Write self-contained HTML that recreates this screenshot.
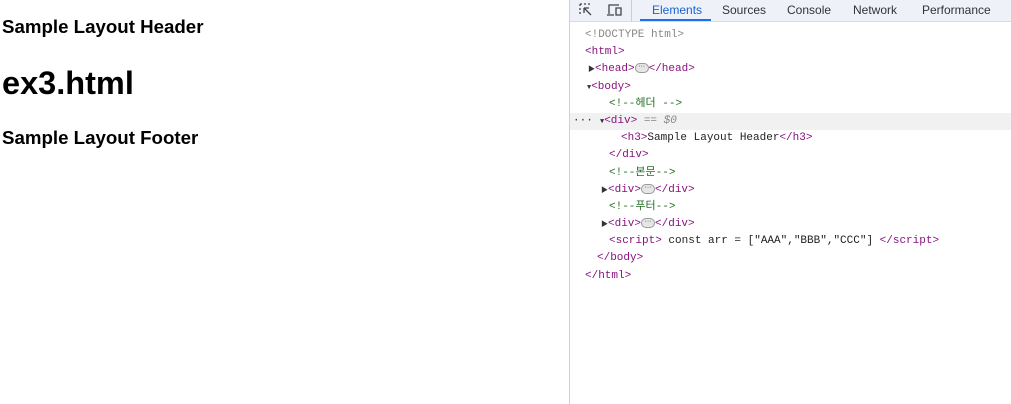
<!DOCTYPE html>
<html><head><style>
body{margin:0;width:1011px;height:404px;overflow:hidden;background:#fff;font-family:"Liberation Sans",sans-serif;position:relative}
.l{position:absolute;left:2px;font-weight:bold;margin:0;white-space:nowrap}
.dt{position:absolute;left:569px;top:0;width:442px;height:404px;border-left:1px solid #d0d0d0;box-sizing:border-box}
.tb{height:21px;background:#eef1f8;border-bottom:1px solid #d6dae2;position:relative;font-size:12px;color:#333}
.tab{position:absolute;top:3px}
.code{position:absolute;left:0;top:27px;width:100%;font-family:"Liberation Mono","Noto Sans CJK KR",monospace;font-size:11px}
.ln{height:17.2px;line-height:17.2px;white-space:pre;position:relative}
.t{color:#881280}.g{color:#236e25}.gr{color:#888}.k{color:#222}
.tri{font-size:7px;color:#333}
.ell{display:inline-block;width:12px;height:8px;border:1px solid #999;border-radius:5px;background:#e6e6e6;font-size:7px;line-height:5px;text-align:center;vertical-align:middle;color:#333;font-family:"Liberation Sans",sans-serif}
</style></head><body>
<div class="l" style="top:16px;font-size:18.7px">Sample Layout Header</div>
<div class="l" style="top:65px;font-size:32.5px">ex3.html</div>
<div class="l" style="top:127px;font-size:18.7px">Sample Layout Footer</div>
<div class="dt">
<div class="tb">
<svg style="position:absolute;left:9px;top:3px" width="14" height="14" viewBox="0 0 14 14" fill="none" stroke="#444" stroke-width="1.3"><path d="M1 1h2M5 1h2M9 1h2M1 1v2M1 5v2M1 9v2M5 5l7 7M5 5h5M5 5v5" /></svg>
<svg style="position:absolute;left:36px;top:3px" width="17" height="14" viewBox="0 0 17 14" fill="none" stroke="#444" stroke-width="1.3"><path d="M3 11V2h10M1 12h7M10 5h5v7h-5z"/></svg>
<div style="position:absolute;left:61px;top:0;width:1px;height:21px;background:#ccc"></div>
<span class="tab" style="left:82px;color:#1a62d6">Elements</span>
<div style="position:absolute;left:70px;top:19px;width:71px;height:2px;background:#1a73e8"></div>
<span class="tab" style="left:152px">Sources</span>
<span class="tab" style="left:217px">Console</span>
<span class="tab" style="left:283px">Network</span>
<span class="tab" style="left:352px">Performance</span>
</div>
<div class="code">
<div class="ln" style="padding-left:15px"><span class="gr">&lt;!DOCTYPE html&gt;</span></div>
<div class="ln" style="padding-left:15px"><span class="t">&lt;html&gt;</span></div>
<div class="ln" style="padding-left:18px"><span class="tri">▶</span><span class="t">&lt;head&gt;</span><span class="ell">···</span><span class="t">&lt;/head&gt;</span></div>
<div class="ln" style="padding-left:17px"><span class="tri">▼</span><span class="t">&lt;body&gt;</span></div>
<div class="ln" style="padding-left:39px"><span class="g">&lt;!--헤더 --&gt;</span></div>
<div class="ln" style="padding-left:30px;background:#f1f1f1"><span style="position:absolute;left:3px;color:#333">···</span><span class="tri">▼</span><span class="t">&lt;div&gt;</span> <span class="gr"><i>== $0</i></span></div>
<div class="ln" style="padding-left:51px"><span class="t">&lt;h3&gt;</span><span class="k">Sample Layout Header</span><span class="t">&lt;/h3&gt;</span></div>
<div class="ln" style="padding-left:39px"><span class="t">&lt;/div&gt;</span></div>
<div class="ln" style="padding-left:39px"><span class="g">&lt;!--본문--&gt;</span></div>
<div class="ln" style="padding-left:31px"><span class="tri">▶</span><span class="t">&lt;div&gt;</span><span class="ell">···</span><span class="t">&lt;/div&gt;</span></div>
<div class="ln" style="padding-left:39px"><span class="g">&lt;!--푸터--&gt;</span></div>
<div class="ln" style="padding-left:31px"><span class="tri">▶</span><span class="t">&lt;div&gt;</span><span class="ell">···</span><span class="t">&lt;/div&gt;</span></div>
<div class="ln" style="padding-left:39px"><span class="t">&lt;script&gt;</span><span class="k"> const arr = ["AAA","BBB","CCC"] </span><span class="t">&lt;/script&gt;</span></div>
<div class="ln" style="padding-left:27px"><span class="t">&lt;/body&gt;</span></div>
<div class="ln" style="padding-left:15px"><span class="t">&lt;/html&gt;</span></div>
</div>
</div>
</body></html>
